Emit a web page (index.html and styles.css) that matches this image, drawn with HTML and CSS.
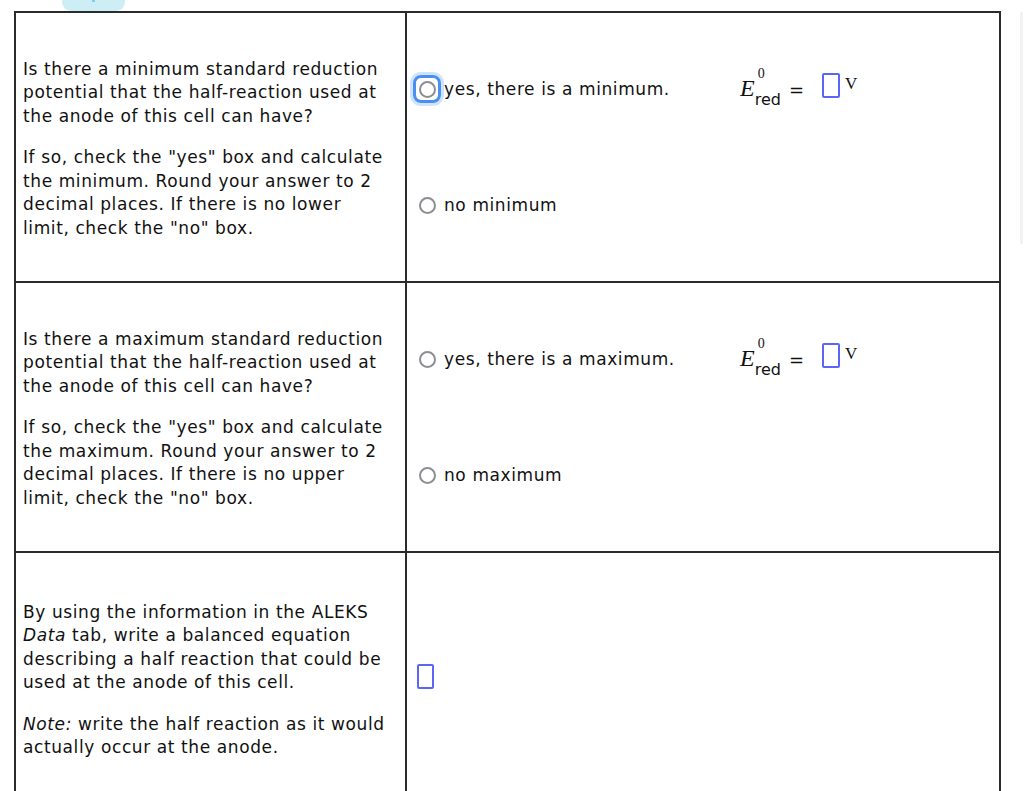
FILE: index.html
```html
<!DOCTYPE html>
<html lang="en">
<head>
    <meta charset="UTF-8">
    <title>ALEKS - Half reaction</title>
    <link rel="stylesheet" href="styles.css">
</head>
<body>
    <div class="tab"><span class="tab-dot"></span></div>
    <div class="scroll-shadow"></div>

    <table class="sheet">
        <tr>
            <td class="question">
                <p>Is there a minimum standard reduction potential that the half-reaction used at the anode of this cell can have?</p>
                <p>If so, check the "yes" box and calculate the minimum. Round your answer to 2 decimal places. If there is no lower limit, check the "no" box.</p>
            </td>
            <td class="answer">
                <div class="choices">
                    <div class="choice">
                        <label class="option"><span class="focus"><span class="radio"></span></span>yes, there is a minimum.</label>
                        <div class="formula">
                            <span class="e-sym">E</span>
                            <span class="scripts"><span class="sup">0</span><span class="sub">red</span></span>
                            <span class="eq">=</span>
                            <span class="box"></span>
                            <span class="unit">V</span>
                        </div>
                    </div>
                    <div class="choice">
                        <label class="option"><span class="radio-wrap"><span class="radio"></span></span>no minimum</label>
                    </div>
                </div>
            </td>
        </tr>
        <tr>
            <td class="question">
                <p>Is there a maximum standard reduction potential that the half-reaction used at the anode of this cell can have?</p>
                <p>If so, check the "yes" box and calculate the maximum. Round your answer to 2 decimal places. If there is no upper limit, check the "no" box.</p>
            </td>
            <td class="answer">
                <div class="choices">
                    <div class="choice">
                        <label class="option"><span class="radio-wrap"><span class="radio"></span></span>yes, there is a maximum.</label>
                        <div class="formula">
                            <span class="e-sym">E</span>
                            <span class="scripts"><span class="sup">0</span><span class="sub">red</span></span>
                            <span class="eq">=</span>
                            <span class="box"></span>
                            <span class="unit">V</span>
                        </div>
                    </div>
                    <div class="choice">
                        <label class="option"><span class="radio-wrap"><span class="radio"></span></span>no maximum</label>
                    </div>
                </div>
            </td>
        </tr>
        <tr class="last">
            <td class="question">
                <p>By using the information in the ALEKS <em>Data</em> tab, write a balanced equation describing a half reaction that could be used at the anode of this cell.</p>
                <p><em>Note:</em> write the half reaction as it would actually occur at the anode.</p>
            </td>
            <td class="answer">
                <span class="box equation-box"></span>
            </td>
        </tr>
    </table>
</body>
</html>
```

FILE: styles.css
```css
body {
    margin: 0;
    background-color: #fff;
    font-family: 'DejaVu Sans', Verdana, sans-serif;
    font-size: 17px;
    letter-spacing: 0.6px;
    color: #111;
    position: relative;
    overflow: hidden;
    height: 791px;
}

.tab {
    width: 63px;
    height: 11px;
    margin-left: 62px;
    background-color: #cdeef4;
    border-radius: 0 0 9px 9px;
    position: relative;
}

.tab-dot {
    position: absolute;
    left: 30px;
    top: 0;
    width: 3px;
    height: 2px;
    background-color: #7fd0e6;
}

.scroll-shadow {
    position: absolute;
    right: 1px;
    top: 12px;
    width: 3px;
    height: 232px;
    background-color: #f1f2f4;
}

.sheet {
    margin-left: 14px;
    width: 987px;
    border-collapse: collapse;
}

.sheet td {
    border: 2px solid #2b2b2b;
    height: 268px;
    vertical-align: middle;
}

.sheet tr.last td {
    height: 250px;
}

.sheet td.question {
    width: 368px;
    height: 264px;
    padding: 4px 14px 0 7px;
    line-height: 23.5px;
}

.sheet tr.last td.question {
    height: 246px;
}

.question p {
    margin: 0;
}

.question p + p {
    margin-top: 18px;
}

.answer {
    padding: 0 0 0 4px;
}

.choices {
    display: flex;
    flex-direction: column;
    gap: 92px;
}

.choice {
    display: flex;
    align-items: center;
    height: 24px;
}

.option {
    display: flex;
    align-items: center;
    width: 330px;
}

.radio-wrap,
.focus {
    width: 33px;
    height: 33px;
    display: flex;
    align-items: center;
    justify-content: center;
    margin-right: 0;
    flex-shrink: 0;
}

.focus {
    box-sizing: border-box;
    border-radius: 8px;
    border: 3px solid #4a8ff2;
    box-shadow: 0 0 0 3px #cfe4fb;
    width: 28px;
    height: 28px;
    margin: 0 3px 0 2px;
}

.radio {
    box-sizing: border-box;
    width: 17px;
    height: 17px;
    border-radius: 50%;
    border: 2.5px solid #8d8d94;
    background-color: #fff;
}

.formula {
    display: flex;
    align-items: center;
    margin-left: -1px;
    letter-spacing: 0;
    font-family: 'Liberation Serif', 'Times New Roman', serif;
}

.e-sym {
    font-style: italic;
    font-size: 24px;
    position: relative;
    top: -1px;
}

.scripts {
    display: flex;
    flex-direction: column;
    align-items: flex-start;
    line-height: 1;
}

.sup {
    font-size: 14px;
    margin-left: 3px;
    position: relative;
    top: -7px;
}

.sub {
    font-family: 'DejaVu Sans', Verdana, sans-serif;
    font-size: 16px;
    position: relative;
    top: 4px;
}

.eq {
    font-family: 'DejaVu Sans', Verdana, sans-serif;
    font-size: 18px;
    margin-left: 8px;
    margin-right: 18px;
}

.box {
    display: inline-block;
    box-sizing: border-box;
    width: 18px;
    height: 25px;
    border: 2px solid #5b66f6;
    border-radius: 2px;
    position: relative;
    top: -4px;
}

.unit {
    font-size: 17px;
    margin-left: 5px;
    position: relative;
    top: -5px;
}

.equation-box {
    width: 17px;
    margin-left: 6px;
    top: 0;
}
```
